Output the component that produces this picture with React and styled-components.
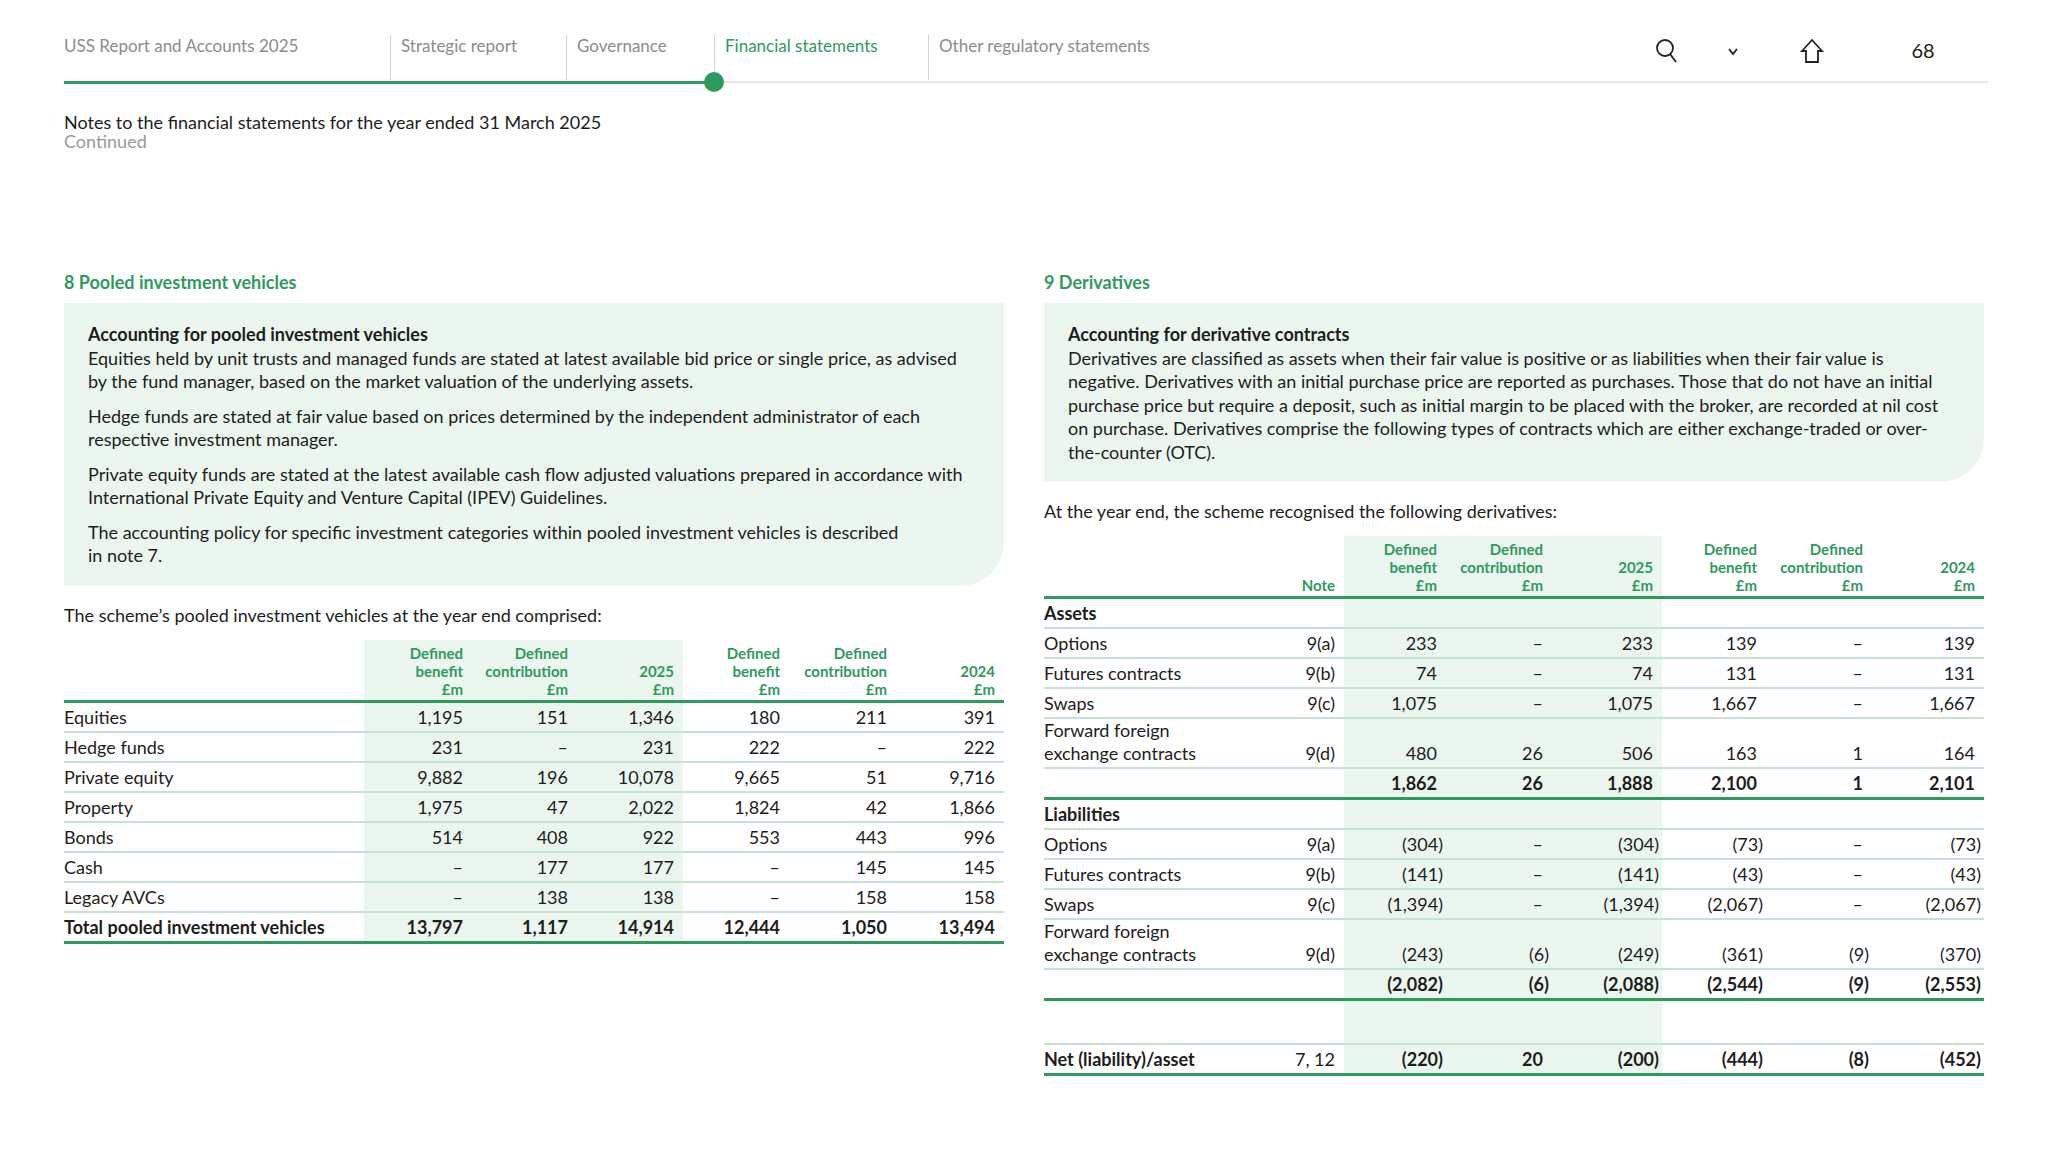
import React from 'react';
import styled, { createGlobalStyle } from 'styled-components';

const green = '#2f9a5e';
const shade = '#ebf6ef';
const rule = '#c6e3d1';

const Global = createGlobalStyle`
  body { margin: 0; background: #fff; font-family: Lato, "Open Sans", sans-serif; color: #1d1d1b; }
`;

const Page = styled.div`
  width: 2048px;
  padding: 0 60px 0 64px;
  box-sizing: border-box;
`;

const Header = styled.header`
  display: flex;
  align-items: stretch;
  height: 80px;
  padding-top: 35px;
  box-sizing: border-box;
`;

const NavItem = styled.div`
  width: ${(p) => p.w}px;
  padding-left: ${(p) => (p.first ? 0 : 10)}px;
  border-left: ${(p) => (p.first ? 'none' : '1px solid #d4d4d4')};
  font-size: 17px;
  color: ${(p) => (p.active ? green : '#8c8c8c')};
  box-sizing: border-box;
`;

const Tools = styled.div`
  margin-left: auto;
  display: flex;
  align-items: flex-start;
  padding-top: 3px;
`;

const Tool = styled.div`
  width: ${(p) => p.w}px;
  display: flex;
  justify-content: center;
  font-size: 20px;
`;

const Progress = styled.div`
  display: flex;
  align-items: center;
  height: 4px;
  position: relative;
`;

const Done = styled.div`
  width: 650px;
  height: 3px;
  background: ${green};
`;

const Rest = styled.div`
  flex: 1;
  height: 2px;
  background: #e6e6e6;
`;

const Dot = styled.div`
  position: absolute;
  left: 640px;
  top: -8px;
  width: 20px;
  height: 20px;
  border-radius: 50%;
  background: ${green};
`;

const Sub = styled.div`
  margin-top: 29px;
  font-size: 18px;
  line-height: 19px;
  span { display: block; color: #999; }
`;

const Columns = styled.div`
  display: flex;
  gap: 40px;
  margin-top: 120px;
`;

const Col = styled.section`
  width: 940px;
`;

const H2 = styled.h2`
  margin: 0 0 10px;
  font-size: 18px;
  font-weight: 700;
  color: ${green};
`;

const Box = styled.div`
  background: ${shade};
  border-radius: 0 0 44px 0;
  padding: 20px 36px 18px 24px;
  font-size: 18px;
  line-height: 23.5px;
  h3 { margin: 0; font-size: 18px; font-weight: 700; }
  p { margin: 0 0 11px; }
  p:last-child { margin-bottom: 0; }
`;

const Intro = styled.p`
  margin: 18px 0 14px;
  font-size: 18px;
`;

const Table = styled.table`
  width: 940px;
  border-collapse: collapse;
  table-layout: fixed;
  font-size: 18px;
`;

const Th = styled.th`
  color: ${green};
  font-size: 15px;
  font-weight: 700;
  line-height: 18px;
  text-align: right;
  vertical-align: bottom;
  padding: 4px 9px 2px 0;
  background: ${(p) => (p.s ? shade : 'transparent')};
  border-bottom: 3px solid ${green};
`;

const Tr = styled.tr`
  border-bottom: ${(p) => (p.thick ? `3px solid ${green}` : `2px solid ${rule}`)};
  font-weight: ${(p) => (p.bold ? 700 : 400)};
`;

const Td = styled.td`
  height: 26px;
  padding: 0 9px 2px 0;
  line-height: 23px;
  text-align: ${(p) => (p.left ? 'left' : 'right')};
  vertical-align: bottom;
  background: ${(p) => (p.s ? shade : 'transparent')};
`;

const Neg = styled.span`
  margin-right: -6px;
`;

const Num = ({ v }) => (v && v.startsWith('(') ? <Neg>{v}</Neg> : v === '-' ? '–' : v);

const pooled = [
  ['Equities', '1,195', '151', '1,346', '180', '211', '391'],
  ['Hedge funds', '231', '-', '231', '222', '-', '222'],
  ['Private equity', '9,882', '196', '10,078', '9,665', '51', '9,716'],
  ['Property', '1,975', '47', '2,022', '1,824', '42', '1,866'],
  ['Bonds', '514', '408', '922', '553', '443', '996'],
  ['Cash', '-', '177', '177', '-', '145', '145'],
  ['Legacy AVCs', '-', '138', '138', '-', '158', '158'],
];

const assets = [
  ['Options', '9(a)', '233', '-', '233', '139', '-', '139'],
  ['Futures contracts', '9(b)', '74', '-', '74', '131', '-', '131'],
  ['Swaps', '9(c)', '1,075', '-', '1,075', '1,667', '-', '1,667'],
  ['Forward foreign exchange contracts', '9(d)', '480', '26', '506', '163', '1', '164'],
];

const liabs = [
  ['Options', '9(a)', '(304)', '-', '(304)', '(73)', '-', '(73)'],
  ['Futures contracts', '9(b)', '(141)', '-', '(141)', '(43)', '-', '(43)'],
  ['Swaps', '9(c)', '(1,394)', '-', '(1,394)', '(2,067)', '-', '(2,067)'],
  ['Forward foreign exchange contracts', '9(d)', '(243)', '(6)', '(249)', '(361)', '(9)', '(370)'],
];

const Heads = () => (
  <>
    <Th s>Defined<br />benefit<br />£m</Th>
    <Th s>Defined<br />contribution<br />£m</Th>
    <Th s>2025<br />£m</Th>
    <Th>Defined<br />benefit<br />£m</Th>
    <Th>Defined<br />contribution<br />£m</Th>
    <Th>2024<br />£m</Th>
  </>
);

const Vals = ({ vals }) => vals.map((v, i) => (
  <Td key={i} s={i < 3}><Num v={v} /></Td>
));

const DerivRow = ({ r, thick, bold }) => (
  <Tr thick={thick} bold={bold}>
    <Td left>
      {r[0] === 'Forward foreign exchange contracts' ? <>Forward foreign<br />exchange contracts</> : r[0]}
    </Td>
    <Td>{r[1]}</Td>
    <Vals vals={r.slice(2)} />
  </Tr>
);

const Search = () => (
  <svg width="24" height="26" viewBox="0 0 24 26" fill="none" stroke="#222" strokeWidth="1.8">
    <circle cx="10" cy="10" r="8" />
    <path d="M15 16l6 8" />
  </svg>
);

const Chevron = () => (
  <svg width="14" height="10" viewBox="0 0 14 10" fill="none" stroke="#222" strokeWidth="1.8" style={{ marginTop: 8 }}>
    <path d="M3 3l4 5 4-5" />
  </svg>
);

const Home = () => (
  <svg width="26" height="26" viewBox="0 0 26 26" fill="none" stroke="#222" strokeWidth="1.8">
    <path d="M13 2L3 13h4v11h12V13h4z" />
  </svg>
);

export default function App() {
  return (
    <Page>
      <Global />
      <Header>
        <NavItem first w={326}>USS Report and Accounts 2025</NavItem>
        <NavItem w={176}>Strategic report</NavItem>
        <NavItem w={148}>Governance</NavItem>
        <NavItem active w={214}>Financial statements</NavItem>
        <NavItem w={340}>Other regulatory statements</NavItem>
        <Tools>
          <Tool w={66}><Search /></Tool>
          <Tool w={66}><Chevron /></Tool>
          <Tool w={92}><Home /></Tool>
          <Tool w={130}>68</Tool>
        </Tools>
      </Header>
      <Progress>
        <Done />
        <Rest />
        <Dot />
      </Progress>
      <Sub>
        Notes to the financial statements for the year ended 31 March 2025
        <span>Continued</span>
      </Sub>
      <Columns>
        <Col>
          <H2>8 Pooled investment vehicles</H2>
          <Box>
            <h3>Accounting for pooled investment vehicles</h3>
            <p>Equities held by unit trusts and managed funds are stated at latest available bid price or single price, as advised by the fund manager, based on the market valuation of the underlying assets.</p>
            <p>Hedge funds are stated at fair value based on prices determined by the independent administrator of each respective investment manager.</p>
            <p>Private equity funds are stated at the latest available cash flow adjusted valuations prepared in accordance with International Private Equity and Venture Capital (IPEV) Guidelines.</p>
            <p>The accounting policy for specific investment categories within pooled investment vehicles is described in&nbsp;note&nbsp;7.</p>
          </Box>
          <Intro>The scheme’s pooled investment vehicles at the year end comprised:</Intro>
          <Table>
            <colgroup>
              <col style={{ width: 300 }} />
              <col style={{ width: 108 }} />
              <col style={{ width: 105 }} />
              <col style={{ width: 106 }} />
              <col style={{ width: 106 }} />
              <col style={{ width: 107 }} />
              <col style={{ width: 108 }} />
            </colgroup>
            <thead>
              <tr>
                <Th />
                <Heads />
              </tr>
            </thead>
            <tbody>
              {pooled.map((r) => (
                <Tr key={r[0]}>
                  <Td left>{r[0]}</Td>
                  <Vals vals={r.slice(1)} />
                </Tr>
              ))}
              <Tr thick bold>
                <Td left>Total pooled investment vehicles</Td>
                <Vals vals={['13,797', '1,117', '14,914', '12,444', '1,050', '13,494']} />
              </Tr>
            </tbody>
          </Table>
        </Col>
        <Col>
          <H2>9 Derivatives</H2>
          <Box>
            <h3>Accounting for derivative contracts</h3>
            <p>Derivatives are classified as assets when their fair value is positive or as liabilities when their fair value is negative. Derivatives with an initial purchase price are reported as purchases. Those that do not have an initial purchase price but require a deposit, such as initial margin to be placed with the broker, are recorded at nil cost on purchase. Derivatives comprise the following types of contracts which are either exchange-traded or over-the-counter (OTC).</p>
          </Box>
          <Intro>At the year end, the scheme recognised the following derivatives:</Intro>
          <Table>
            <colgroup>
              <col style={{ width: 189 }} />
              <col style={{ width: 111 }} />
              <col style={{ width: 102 }} />
              <col style={{ width: 106 }} />
              <col style={{ width: 110 }} />
              <col style={{ width: 104 }} />
              <col style={{ width: 106 }} />
              <col style={{ width: 112 }} />
            </colgroup>
            <thead>
              <tr>
                <Th />
                <Th>Note</Th>
                <Heads />
              </tr>
            </thead>
            <tbody>
              <Tr bold>
                <Td left>Assets</Td><Td /><Vals vals={['', '', '', '', '', '']} />
              </Tr>
              {assets.map((r) => <DerivRow key={r[0]} r={r} />)}
              <DerivRow thick bold r={['', '', '1,862', '26', '1,888', '2,100', '1', '2,101']} />
              <Tr bold>
                <Td left>Liabilities</Td><Td /><Vals vals={['', '', '', '', '', '']} />
              </Tr>
              {liabs.map((r) => <DerivRow key={r[0]} r={r} />)}
              <DerivRow thick bold r={['', '', '(2,082)', '(6)', '(2,088)', '(2,544)', '(9)', '(2,553)']} />
              <Tr>
                <Td left style={{ height: 40 }} /><Td /><Vals vals={['', '', '', '', '', '']} />
              </Tr>
              <Tr thick bold>
                <Td left>Net (liability)/asset</Td>
                <Td style={{ fontWeight: 400 }}>7, 12</Td>
                <Vals vals={['(220)', '20', '(200)', '(444)', '(8)', '(452)']} />
              </Tr>
            </tbody>
          </Table>
        </Col>
      </Columns>
    </Page>
  );
}
